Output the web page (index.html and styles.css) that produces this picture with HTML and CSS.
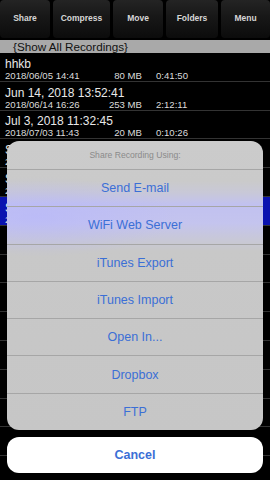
FILE: index.html
```html
<!DOCTYPE html>
<html>
<head>
<meta charset="utf-8">
<link rel="stylesheet" href="styles.css">
</head>
<body>
<div class="screen">
  <div class="toolbar">
    <div class="tb w50">Share</div>
    <div class="tb w57">Compress</div>
    <div class="tb w50">Move</div>
    <div class="tb w52">Folders</div>
    <div class="tb w49">Menu</div>
  </div>
  <div class="folder">{Show All Recordings}</div>
  <div class="list">
    <div class="row">
      <div class="title">hhkb</div>
      <div class="sub"><span>2018/06/05 14:41</span><span class="size">80 MB</span><span class="dur">0:41:50</span></div>
    </div>
    <div class="row">
      <div class="title">Jun 14, 2018 13:52:41</div>
      <div class="sub"><span>2018/06/14 16:26</span><span class="size">253 MB</span><span class="dur">2:12:11</span></div>
    </div>
    <div class="row">
      <div class="title">Jul 3, 2018 11:32:45</div>
      <div class="sub"><span>2018/07/03 11:43</span><span class="size">20 MB</span><span class="dur">0:10:26</span></div>
    </div>
    <div class="row">
      <div class="title">Sep 2, 2018</div>
      <div class="sub"><span>2018/09/02</span></div>
    </div>
    <div class="row">
      <div class="title">Sep 8, 2018</div>
      <div class="sub"><span>2018/09/08</span></div>
    </div>
    <div class="row selected">
      <div class="title">Sep 12, 2018</div>
      <div class="sub"><span>2018/09/12</span></div>
    </div>
    <div class="row empty"></div>
    <div class="row empty"></div>
    <div class="row empty"></div>
    <div class="row empty"></div>
    <div class="row empty"></div>
    <div class="row empty"></div>
    <div class="row empty"></div>
    <div class="row empty"></div>
  </div>

  <div class="actions">
    <div class="sheet">
      <div class="sheet-title">Share Recording Using:</div>
      <div class="item">Send E-mail</div>
      <div class="item">WiFi Web Server</div>
      <div class="item">iTunes Export</div>
      <div class="item">iTunes Import</div>
      <div class="item">Open In...</div>
      <div class="item">Dropbox</div>
      <div class="item">FTP</div>
    </div>
    <div class="cancel">Cancel</div>
  </div>
</div>
</body>
</html>
```

FILE: styles.css
```css
html, body {
  margin: 0;
  padding: 0;
  background: #000;
}
.screen {
  position: relative;
  width: 270px;
  height: 480px;
  overflow: hidden;
  background: #000;
  font-family: "Liberation Sans", Arial, sans-serif;
}
.toolbar {
  display: flex;
  gap: 3px;
  height: 38px;
  margin-bottom: 2px;
}
.tb {
  display: flex;
  align-items: center;
  justify-content: center;
  padding-bottom: 2px;
  box-sizing: border-box;
  border-radius: 4px;
  background: linear-gradient(to bottom, #242424 0%, #171717 45%, #0c0c0c 100%);
  color: #d6d6d6;
  font-weight: bold;
  font-size: 8.5px;
}
.w50 { width: 50px; }
.w57 { width: 57px; }
.w52 { width: 52px; }
.w49 { width: 49px; }
.folder {
  height: 13px;
  line-height: 13px;
  background: #a9a9a9;
  color: #111;
  font-size: 11.7px;
  padding-left: 13px;
}
.list {
  display: flex;
  flex-direction: column;
}
.row {
  flex: none;
  box-sizing: border-box;
  height: 28.8px;
  border-bottom: 1px solid #333;
  padding: 4.8px 0 0 5px;
  color: #e8e8e8;
  overflow: hidden;
}
.row.selected {
  background: #0a12b0;
}
.title {
  font-size: 12px;
  line-height: 13px;
  white-space: nowrap;
}
.sub {
  display: grid;
  grid-template-columns: 90px 47px 1fr;
  font-size: 9.6px;
  line-height: 10.5px;
  white-space: nowrap;
  color: #dcdcdc;
}
.size {
  text-align: right;
}
.dur {
  padding-left: 14px;
}
.actions {
  position: absolute;
  left: 7px;
  right: 7px;
  top: 141px;
  display: flex;
  flex-direction: column;
  gap: 7px;
}
.sheet {
  height: 289px;
  border-radius: 12px;
  overflow: hidden;
  display: flex;
  flex-direction: column;
  background:
    radial-gradient(ellipse 140px 40px at 30px 76px, rgba(180, 180, 255, 0.5), rgba(180, 180, 255, 0) 100%),
    linear-gradient(to bottom, #cbcbcb 0px, #cacaca 40px, #c8c8d8 52px, #c1c1f0 64px, #c4c4ee 82px, #c8c8d8 98px, #c8c8c8 110px, #c6c6c6 100%);
}
.sheet-title {
  height: 28px;
  flex: none;
  display: flex;
  align-items: center;
  justify-content: center;
  font-size: 8.6px;
  color: #8a8a8a;
}
.item {
  flex: 1;
  display: flex;
  align-items: center;
  justify-content: center;
  border-top: 1px solid #a6a6a6;
  font-size: 12.5px;
  color: #3b6fd6;
}
.cancel {
  height: 36px;
  border-radius: 12px;
  background: #fff;
  display: flex;
  align-items: center;
  justify-content: center;
  font-size: 12.5px;
  font-weight: bold;
  color: #3b6fd6;
}
```
